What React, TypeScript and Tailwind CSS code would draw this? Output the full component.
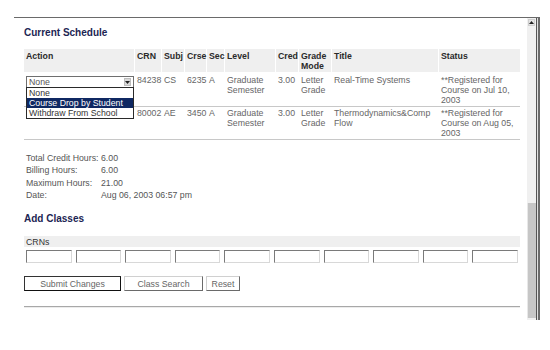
import React from "react";

const cols =
  "grid grid-cols-[110px_26px_22px_21px_17px_50px_22px_32px_106px_81px] gap-x-px";

function Cell({ children, className = "" }: { children?: React.ReactNode; className?: string }) {
  return <div className={"pl-[2px] " + className}>{children}</div>;
}

function Row({
  first,
  crn,
  subj,
  crse,
  title,
  date,
}: {
  first?: boolean;
  crn: string;
  subj: string;
  crse: string;
  title: string;
  date: string;
}) {
  return (
    <div
      className={
        cols +
        " border-b border-[#c8c8c8] text-[#666] leading-[10px] " +
        (first ? "pt-[3px] pb-px" : "pt-px pb-px")
      }
    >
      <div className="relative">
        {first ? (
          <>
            <div className="absolute left-[2px] top-px w-[108px] h-[12px] border border-[#6f6f6f] bg-white flex items-center">
              <span className="pl-[2px] text-[#555] leading-[10px]">None</span>
              <div className="absolute right-[2px] top-[1px] w-[7px] h-[8px] bg-[#d9d9d9] border border-[#bdbdbd] flex items-center justify-center">
                <svg width="5" height="3" viewBox="0 0 5 3">
                  <polygon points="0,0 5,0 2.5,3" fill="#222" />
                </svg>
              </div>
            </div>
            <div className="absolute left-[2px] top-[12px] w-[108px] border border-[#2a2a2a] bg-white z-10 leading-[10px]">
              <div className="pl-[2px] h-[10px] text-[#333]">None</div>
              <div className="pl-[2px] h-[10px] bg-[#0f2862] text-white">Course Drop by Student</div>
              <div className="pl-[2px] h-[10px] text-[#333]">Withdraw From School</div>
            </div>
          </>
        ) : null}
      </div>
      <Cell>{crn}</Cell>
      <Cell>{subj}</Cell>
      <Cell>{crse}</Cell>
      <Cell>A</Cell>
      <Cell>Graduate Semester</Cell>
      <Cell>3.00</Cell>
      <Cell>Letter Grade</Cell>
      <Cell>{title}</Cell>
      <Cell>**Registered for Course on {date}, 2003</Cell>
    </div>
  );
}

export default function App() {
  return (
    <div className="w-[550px] h-[350px] bg-white overflow-hidden font-['Liberation_Sans',Arial,sans-serif] text-[8.75px]">
      <div className="pt-[17px] pl-[14px] w-[540px]">
        <div className="flex h-[303px] border-t border-[#6a6a6a]">
          <div className="flex-1 pl-[10px] pr-[7px]">
            <div className="pt-[9px] text-[10px] leading-[12px] font-bold text-[#1c2553]">Current Schedule</div>

            <div className="mt-[10px]">
              <div className={cols + " leading-[10px] font-bold text-[#2a2a2a]"}>
                {["Action", "CRN", "Subj", "Crse", "Sec", "Level", "Cred", "Grade Mode", "Title", "Status"].map(
                  (h) => (
                    <div key={h} className="bg-[#efefef] pl-[2px] pt-[2px] pb-px">
                      {h}
                    </div>
                  )
                )}
              </div>
              <Row first crn="84238" subj="CS" crse="6235" title="Real-Time Systems" date="Jul 10" />
              <Row crn="80002" subj="AE" crse="3450" title="Thermodynamics&Comp Flow" date="Aug 05" />
            </div>

            <div className="mt-[12px] pl-[2px] grid grid-cols-[75px_auto] leading-[12.3px] text-[#555]">
              <div>Total Credit Hours:</div>
              <div>6.00</div>
              <div>Billing Hours:</div>
              <div>6.00</div>
              <div>Maximum Hours:</div>
              <div>21.00</div>
              <div>Date:</div>
              <div>Aug 06, 2003 06:57 pm</div>
            </div>

            <div className="mt-[12px] text-[10px] leading-[12px] font-bold text-[#1c2553]">Add Classes</div>

            <div className="mt-[11px] bg-[#efefef] pl-[2px] pt-px leading-[10px] text-[#333]">CRNs</div>
            <div className="mt-[3px] px-[2px] grid grid-cols-10 gap-x-[4px]">
              {Array.from({ length: 10 }).map((_, i) => (
                <div
                  key={i}
                  className="h-[13px] bg-white border-t border-l border-[#7a7a7a] border-b border-r border-b-[#d8d8d8] border-r-[#d8d8d8]"
                />
              ))}
            </div>

            <div className="mt-[13px] flex gap-[3px] text-[#666] leading-[10px]">
              <button className="w-[97px] h-[15px] bg-white border border-[#333] border-r-[#111] border-b-[#111] text-[8.75px] text-[#666]">
                Submit Changes
              </button>
              <button className="w-[79px] h-[15px] bg-white border border-[#d0d0d0] border-r-[#6a6a6a] border-b-[#6a6a6a] text-[8.75px] text-[#666]">
                Class Search
              </button>
              <button className="w-[34px] h-[15px] bg-white border border-[#d0d0d0] border-r-[#6a6a6a] border-b-[#6a6a6a] text-[8.75px] text-[#666]">
                Reset
              </button>
            </div>

            <div className="mt-[15px] border-t border-[#a8a8a8] border-b border-b-[#ececec]" />
          </div>

          <div className="flex">
            <div className="w-[9px] bg-[#f0f0f0] flex flex-col">
              <div className="mt-[1px] ml-px w-[7px] h-[7px] bg-[#e4e4e4] border border-[#cfcfcf] flex items-center justify-center">
                <svg width="5" height="3" viewBox="0 0 5 3">
                  <polygon points="0,3 5,3 2.5,0" fill="#222" />
                </svg>
              </div>
              <div className="mt-[177px] h-[115px] bg-[#c6c6c6] border-l border-[#e8e8e8]" />
            </div>
            <div className="w-px bg-[#555]" />
            <div className="w-px bg-[#e0e0e0]" />
            <div className="w-[2px] bg-[#6a6a6a]" />
          </div>
        </div>
      </div>
    </div>
  );
}
